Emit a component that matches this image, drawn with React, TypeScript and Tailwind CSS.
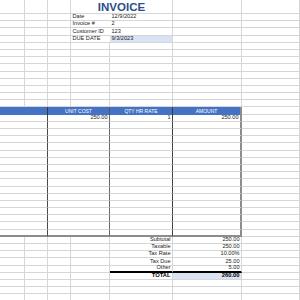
import React from "react";
import clsx from "clsx";

type CellDef = {
  w: number;
  text?: string;
  align?: "left" | "right" | "center";
  cls?: string;
  textCls?: string;
};

// column widths: A B C D E F G
const W = [25, 23, 23, 39, 63, 69, 58];

const WIDTH: Record<number, string> = {
  25: "w-[25px]",
  23: "w-[23px]",
  39: "w-[39px]",
  63: "w-[63px]",
  69: "w-[69px]",
  58: "w-[58px]",
  48: "w-[48px]",
  62: "w-[62px]",
  102: "w-[102px]",
};

const GRID = "border-r border-b border-[#d6d6d6]";
const TXT = "text-[5.6px] leading-none text-[#1c1c1c]";
const HEAD_TXT = "text-[5px] leading-none text-white";

function Row({ cells, tall }: { cells: CellDef[]; tall?: boolean }) {
  return (
    <div className={clsx("flex", tall ? "h-[14px]" : "h-[7.2px]")}>
      {cells.map((c, i) => (
        <div
          key={i}
          className={clsx(
            "flex shrink-0 items-center whitespace-nowrap",
            WIDTH[c.w],
            c.cls ?? GRID,
            c.align === "right" ? "justify-end pr-[1.5px]" : c.align === "center" ? "justify-center" : "justify-start pl-[1.5px]"
          )}
        >
          {c.text && <span className={c.textCls ?? TXT}>{c.text}</span>}
        </div>
      ))}
    </div>
  );
}

const plain = (): CellDef[] => W.map((w) => ({ w }));

const info = [
  { label: "Date", value: "12/9/2022" },
  { label: "Invoice #", value: "2" },
  { label: "Customer ID", value: "123" },
  { label: "DUE DATE", value: "9/3/2023", hl: true },
];

const summary = [
  { label: "Subtotal", value: "250.00" },
  { label: "Taxable", value: "250.00" },
  { label: "Tax Rate", value: "10.00%" },
  { label: "Tax Due", value: "25.00" },
  { label: "Other", value: "5.00", line: true },
];

function itemRow(i: number, last: boolean): CellDef[] {
  const b = last ? "border-b-2 border-b-[#8c8c8c]" : "border-b border-b-[#d6d6d6]";
  const first = i === 0;
  return [
    { w: 48, cls: clsx("border-r border-r-[#4a4a4a]", b) },
    { w: 62, cls: clsx("border-r border-r-[#666666]", b), text: first ? "250.00" : undefined, align: "right" },
    { w: 63, cls: clsx("border-r border-r-[#3f3f3f]", b), text: first ? "1" : undefined, align: "right" },
    { w: 69, cls: clsx("border-r-2 border-r-[#8c8c8c]", b), text: first ? "250.00" : undefined, align: "right" },
    { w: 58 },
  ];
}

export default function App() {
  const rows: { cells: CellDef[]; tall?: boolean }[] = [];

  // row 1: title
  rows.push({
    tall: true,
    cells: [
      { w: 25 },
      { w: 23 },
      { w: 23 },
      {
        w: 102,
        text: "INVOICE",
        align: "center",
        textCls: "text-[11.5px] font-bold leading-[12px] text-[#2e4c8c]",
      },
      { w: 69 },
      { w: 58 },
    ],
  });

  // rows 2-5: invoice info
  info.forEach((r) =>
    rows.push({
      cells: [
        { w: 25 },
        { w: 23 },
        { w: 23 },
        { w: 39, text: r.label, cls: "border-b border-[#d6d6d6]" },
        { w: 63, text: r.value, cls: clsx(GRID, r.hl && "bg-[#dae3f3]") },
        { w: 69 },
        { w: 58 },
      ],
    })
  );

  // rows 6-14: empty
  for (let i = 0; i < 9; i++) rows.push({ cells: plain() });

  // row 15: table header
  rows.push({
    cells: [
      { w: 48, cls: "bg-[#4472c4] border-r border-r-[#3a3a3a]" },
      { w: 62, text: "UNIT COST", align: "center", cls: "bg-[#4472c4] border-r border-r-[#555555]", textCls: HEAD_TXT },
      { w: 63, text: "QTY HR RATE", align: "center", cls: "bg-[#4472c4] border-r border-r-[#3a3a3a]", textCls: HEAD_TXT },
      { w: 69, text: "AMOUNT", align: "center", cls: "bg-[#4472c4] border-r-2 border-r-[#8c8c8c]", textCls: HEAD_TXT },
      { w: 58 },
    ],
  });

  // rows 16-32: line items
  for (let i = 0; i < 17; i++) rows.push({ cells: itemRow(i, i === 16) });

  // rows 33-37: totals block
  summary.forEach((s) => {
    const c = s.line ? "border-r border-r-[#d6d6d6] border-b-2 border-b-black" : GRID;
    rows.push({
      cells: [
        { w: 25 },
        { w: 23 },
        { w: 23 },
        { w: 39 },
        { w: 63, text: s.label, align: "right", cls: c },
        { w: 69, text: s.value, align: "right", cls: c },
        { w: 58 },
      ],
    });
  });

  // row 38: total
  rows.push({
    cells: [
      { w: 25 },
      { w: 23 },
      { w: 23 },
      { w: 39 },
      { w: 63, text: "TOTAL", align: "right", textCls: "text-[5.8px] font-bold leading-none text-black" },
      { w: 69, text: "260.00", align: "right", cls: clsx(GRID, "bg-[#dae3f3]"), textCls: "text-[5.8px] font-bold leading-none text-black" },
      { w: 58 },
    ],
  });

  for (let i = 0; i < 3; i++) rows.push({ cells: plain() });

  return (
    <div className="h-[300px] w-[300px] overflow-hidden bg-white font-['Liberation_Sans',Arial,sans-serif]">
      {rows.map((r, i) => (
        <Row key={i} cells={r.cells} tall={r.tall} />
      ))}
    </div>
  );
}
